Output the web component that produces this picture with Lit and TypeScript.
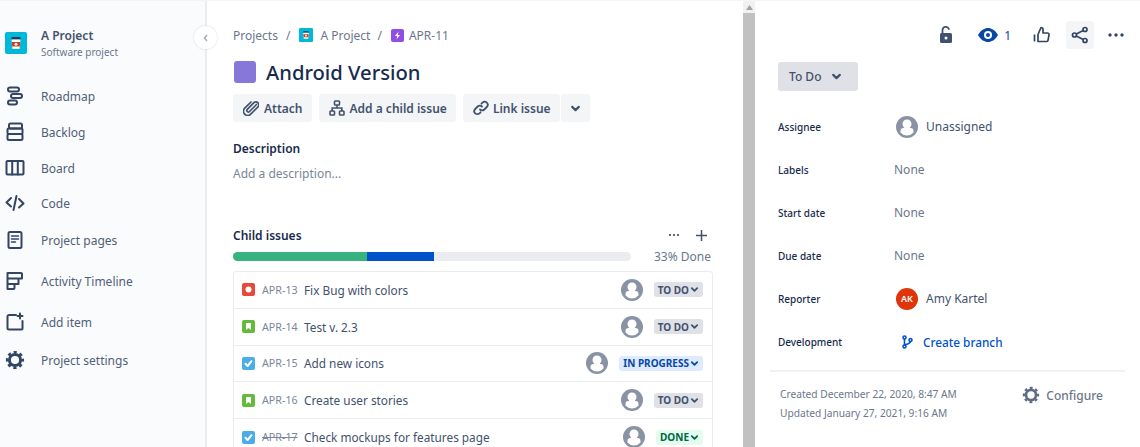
import { LitElement, html, css, svg } from "lit";
import { customElement } from "lit/decorators.js";

const stroke = (body: unknown, size = 20, color = "#344563", width = 2) => html`<svg width=${size} height=${size} viewBox="0 0 20 20" fill="none" stroke=${color} stroke-width=${width} stroke-linecap="round" stroke-linejoin="round">${body}</svg>`;

const gear = (size: number, color: string) => html`<svg width=${size} height=${size} viewBox="0 0 20 20" fill="none" stroke=${color}>
  <circle cx="10" cy="10" r="5.6" stroke-width="3"></circle>
  <circle cx="10" cy="10" r="7.9" stroke-width="2.4" stroke-dasharray="3.2 3" stroke-dashoffset="1.6"></circle>
</svg>`;

const navIcons: Record<string, unknown> = {
  roadmap: stroke(svg`<rect x="3" y="1.5" width="11" height="4" rx="2"/><rect x="6" y="8" width="11" height="4" rx="2"/><rect x="3" y="14.5" width="9" height="4" rx="2"/>`),
  backlog: stroke(svg`<rect x="4" y="1.5" width="13" height="5" rx="1.5"/><rect x="2.5" y="6.5" width="15" height="5.5" rx="1"/><rect x="2.5" y="12" width="15" height="6" rx="1.5"/>`),
  board: stroke(svg`<rect x="1.5" y="3" width="17" height="13.5" rx="1"/><path d="M7.2 3v13.5M12.8 3v13.5"/>`),
  code: stroke(svg`<path d="M6 5 1.5 9.5 6 13.5M14 6l4.5 4.5L14 14.500M11.500 3 8.500 17"/>`),
  pages: stroke(svg`<rect x="3.500" y="2" width="13" height="16" rx="1.500"/><path d="M6.500 6h7M6.500 9h7M6.500 12h4" stroke-width="1.500"/>`),
  timeline: stroke(svg`<path d="M2.500 2h13.500a1 1 0 0 1 1 1v4.500h-14.500zM2.500 7.500h11v5.500h-11zM2.500 13h7v4a1 1 0 0 1-1 1h-6z" />`),
  add: stroke(svg`<path d="M11 3H4a1.500 1.500 0 0 0-1.500 1.500V16A1.500 1.500 0 0 0 4 17.500h12.500a1 1 0 0 0 1-1V9"/><path d="M15 1.500v5M12.500 4h5"/>`),
  settings: gear(20, "#344563"),
};

const nav = [
  { icon: "roadmap", label: "Roadmap", h: 36 },
  { icon: "backlog", label: "Backlog", h: 36 },
  { icon: "board", label: "Board", h: 36 },
  { icon: "code", label: "Code", h: 34 },
  { icon: "pages", label: "Project pages", h: 40 },
  { icon: "timeline", label: "Activity Timeline", h: 42 },
  { icon: "add", label: "Add item", h: 40 },
  { icon: "settings", label: "Project settings", h: 36 },
];

const projectLogo = (size: number) => html`<svg width=${size} height=${size} viewBox="0 0 22 22">
  <rect width="22" height="22" rx="2" fill="#00b8d9"></rect>
  <path d="M7 5h8l1 2.500H6z" fill="#253858"></path>
  <path d="M6.500 7.500h9l-1 9.500h-7z" fill="#fff"></path>
  <path d="M6.800 10h8.400l-.5 4.500H7.300z" fill="#de350b"></path>
  <circle cx="11" cy="12.200" r="1.500" fill="#fff"></circle>
</svg>`;

const typeIcon = (t: string) => {
  if (t === "bug") return html`<svg width="13" height="13" viewBox="0 0 13 13"><rect width="13" height="13" rx="2" fill="#e5493a"></rect><circle cx="6.500" cy="6.500" r="3" fill="#fff"></circle></svg>`;
  if (t === "story") return html`<svg width="13" height="13" viewBox="0 0 13 13"><rect width="13" height="13" rx="2" fill="#63ba3c"></rect><path d="M4 3h5v7L6.500 8 4 10z" fill="#fff"></path></svg>`;
  return html`<svg width="13" height="13" viewBox="0 0 13 13"><rect width="13" height="13" rx="2" fill="#4bade8"></rect><path d="M3.500 6.800 5.600 9 9.500 4.200" fill="none" stroke="#fff" stroke-width="2" stroke-linecap="round" stroke-linejoin="round"></path></svg>`;
};

const avatar = (size: number) => html`<svg width=${size} height=${size} viewBox="0 0 22 22" style="flex:none">
  <circle cx="11" cy="11" r="11" fill="#8993a4"></circle>
  <circle cx="11" cy="8" r="4.500" fill="#fff"></circle>
  <path d="M4.500 15a3 3 0 0 1 3-3h7a3 3 0 0 1 3 3v1.500a8.500 8.500 0 0 1-13 0z" fill="#fff"></path>
</svg>`;

const chevron = (color: string, size = 10) => html`<svg width=${size} height=${size} viewBox="0 0 10 10" fill="none" stroke=${color} stroke-width="2" stroke-linecap="round" stroke-linejoin="round"><path d="M2 3.500 5 6.500 8 3.500"></path></svg>`;

const issues = [
  { type: "bug", key: "APR-13", text: "Fix Bug with colors", status: "TO DO", cls: "todo" },
  { type: "story", key: "APR-14", text: "Test v. 2.3", status: "TO DO", cls: "todo" },
  { type: "task", key: "APR-15", text: "Add new icons", status: "IN PROGRESS", cls: "prog" },
  { type: "story", key: "APR-16", text: "Create user stories", status: "TO DO", cls: "todo" },
  { type: "task", key: "APR-17", text: "Check mockups for features page", status: "DONE", cls: "done", strike: true },
];

const fields = ["Assignee", "Labels", "Start date", "Due date", "Reporter", "Development"];

@customElement("app-root")
export class AppRoot extends LitElement {
  static styles = css`
    :host { display: block; width: 1140px; height: 447px; overflow: hidden; background: #fff;
      font-family: "Noto Sans", "Open Sans", sans-serif; color: #42526e; font-size: 12px; }
    * { box-sizing: border-box; }
    .app { display: flex; height: 447px; border-top: 1px solid #f4f5f7; position: relative; }
    .side { width: 207px; flex: none; background: #fafbfc; border-right: 2px solid #ebecf0; padding: 27px 0 0 5px; }
    .proj { display: flex; align-items: flex-start; gap: 14px; height: 48px; margin-bottom: 2px; }
    .proj svg { margin-top: 4px; }
    .pname { font-size: 12px; font-weight: 600; line-height: 16px; }
    .psub { font-size: 10px; color: #6b778c; line-height: 16px; }
    .nav { display: flex; align-items: center; gap: 16px; color: #505f79; font-size: 12px; }
    .nav svg { flex: none; }
    .collapse { position: absolute; left: 194px; top: 25px; width: 23px; height: 23px; border-radius: 50%; background: #fff;
      box-shadow: 0 0 2px rgba(9,30,66,.18); display: flex; align-items: center; justify-content: center; }
    .main { width: 536px; flex: none; padding: 0 30px 0 26px; }
    .crumbs { display: flex; align-items: center; height: 20px; margin-top: 24px; color: #6b778c; font-size: 12px; }
    .crumbs .sep { margin: 0 9px 0 7px; }
    .crumbs .sep.first { margin-left: 8px; }
    .crumbs .logo { display: flex; margin-right: 7px; }
    .crumbs .epic { display: flex; margin-right: 5px; }
    .title { display: flex; align-items: center; gap: 10px; margin-top: 10px; height: 34px; font-size: 20.2px; font-weight: 500; color: #172b4d; }
    .sq { width: 22px; height: 22px; margin-left: 1px; border-radius: 3px; background: #8777d9; flex: none; }
    .btns { display: flex; gap: 7px; margin-top: 5px; }
    .btn { height: 28px; display: flex; align-items: center; gap: 5px; background: #f4f5f7; border-radius: 3px; padding: 0 9px 0 10px; font-size: 12px; font-weight: 600; color: #42526e; }
    .btn.tight { gap: 4px; }
    .split { display: flex; gap: 1px; }
    .split .btn.arrow { padding: 0 9px; }
    .h { font-size: 12px; font-weight: 600; color: #172b4d; }
    .desc-h { margin-top: 18px; height: 18px; line-height: 18px; }
    .desc { margin-top: 7px; color: #7a869a; font-size: 12px; height: 18px; line-height: 18px; }
    .child-head { display: flex; align-items: center; margin-top: 43px; height: 18px; width: 475px; }
    .child-head .h { flex: 1; }
    .head-tools { display: flex; align-items: center; gap: 15px; }
    .prog-row { display: flex; align-items: center; justify-content: space-between; width: 478px; margin-top: 3px; height: 18px; }
    .bar { width: 398px; height: 9px; border-radius: 5px; background: #ebecf0; display: flex; overflow: hidden; }
    .bar i { display: block; height: 100%; }
    .pct { color: #6b778c; font-size: 12px; }
    .table { width: 480px; margin-top: 6px; border: 1px solid #ebecf0; border-radius: 3px 3px 0 0; }
    .row { display: flex; align-items: center; height: 36.8px; padding: 0 9px 0 8px; border-bottom: 1px solid #ebecf0; }
    .key { width: 42px; margin-left: 7px; color: #7a869a; font-size: 10.7px; flex: none; }
    .key.strike { text-decoration: line-through; }
    .sum { flex: 1; font-size: 11.8px; color: #42526e; }
    .loz { margin-left: 11px; height: 15px; display: flex; align-items: center; gap: 1px; border-radius: 3px; padding: 0 4px; font-size: 10px; font-weight: 700; }
    .todo { background: #dfe1e6; color: #42526e; }
    .prog { background: #deebff; color: #0747a6; }
    .done { background: #e3fcef; color: #006644; }
    .scroll { width: 12px; flex: none; background: #f1f1f1; display: flex; flex-direction: column; align-items: center; }
    .scroll .arrow { height: 12px; display: flex; align-items: center; justify-content: center; }
    .scroll .thumb { flex: 1; width: 100%; background: #c1c1c1; }
    .right { flex: 1; padding: 0 14px 0 23px; min-width: 0; }
    .tools { display: flex; align-items: center; justify-content: flex-end; height: 28px; margin: 20px -4px 0 0; }
    .tool { display: flex; align-items: center; justify-content: center; height: 28px; width: 28px; }
    .tool.on { background: #f4f5f7; border-radius: 3px; }
    .tool.lock { margin-right: 18px; }
    .tool.like { margin-left: 17px; }
    .tool.share { margin-left: 10px; }
    .tool.more { margin-left: 8px; }
    .count { color: #0747a6; font-size: 12px; margin-left: 6px; }
    .status { display: flex; align-items: center; gap: 10px; width: 80px; height: 29px; padding-left: 11px; margin-top: 13px; background: #dfe1e6; border-radius: 3px; font-size: 12px; font-weight: 500; color: #42526e; }
    .fields { display: grid; grid-template-columns: 116px 1fr; grid-auto-rows: 43px; margin-top: 14px; align-items: center; }
    .lab { font-size: 10px; font-weight: 500; color: #172b4d; }
    .val { display: flex; align-items: center; color: #6b778c; font-size: 12px; }
    .val.person { gap: 8px; padding-left: 2px; color: #42526e; }
    .val.link { padding-left: 8px; gap: 10px; color: #0052cc; font-weight: 500; font-size: 11.8px; }
    .ak { width: 22px; height: 22px; border-radius: 50%; background: #de350b; color: #fff; font-size: 9px; font-weight: 600; display: flex; align-items: center; justify-content: center; }
    .foot { display: flex; justify-content: space-between; margin: 7px 0 0 -8px; border-top: 2px solid #f0f1f3; padding: 13px 22px 0 10px; width: 355px; }
    .dates { font-size: 10.2px; color: #6b778c; line-height: 19px; }
    .conf { display: flex; align-items: center; gap: 6px; height: 24px; margin-top: -2px; color: #6b778c; font-size: 12px; font-weight: 500; }
  `;

  render() {
    return html`<div class="app">
      <aside class="side">
        <div class="proj">
          ${projectLogo(22)}
          <div><div class="pname">A Project</div><div class="psub">Software project</div></div>
        </div>
        ${nav.map((n) => html`<div class="nav" style="height:${n.h}px">${navIcons[n.icon]}<span>${n.label}</span></div>`)}
      </aside>
      <div class="collapse"><svg width="10" height="10" viewBox="0 0 10 10" fill="none" stroke="#a5adba" stroke-width="1.500"><path d="M6 2 3.500 5 6 8"></path></svg></div>

      <main class="main">
        <div class="crumbs">
          <span>Projects</span><span class="sep first">/</span>
          <span class="logo">${projectLogo(14)}</span><span>A Project</span><span class="sep">/</span>
          <span class="epic"><svg width="13" height="13" viewBox="0 0 13 13"><rect width="13" height="13" rx="2" fill="#904ee2"></rect><path d="M7.500 2.500 4 7h2.200L5.500 10.500 9 6H6.800z" fill="#fff"></path></svg></span><span>APR-11</span>
        </div>
        <div class="title"><span class="sq"></span><span>Android Version</span></div>
        <div class="btns">
          <div class="btn">
            <svg width="16" height="16" viewBox="0 0 16 16" fill="none" stroke="#42526e" stroke-width="1.700" stroke-linecap="round"><path d="M13.500 4.500 6.500 11.500a1.500 1.500 0 0 1-2.200-2.200l7-7a3 3 0 0 1 3.900 4.400l-7.500 7.500a4.200 4.200 0 0 1-6-6L8 2"></path></svg>
            <span>Attach</span></div>
          <div class="btn">
            <svg width="16" height="16" viewBox="0 0 16 16" fill="none" stroke="#42526e" stroke-width="1.600"><rect x="5.500" y="1" width="5" height="4" rx=".7"></rect><rect x="1" y="11" width="4.500" height="4" rx=".7"></rect><rect x="10.500" y="11" width="4.500" height="4" rx=".7"></rect><path d="M8 5v3M3.200 11V8h9.600v3"></path></svg>
            <span>Add a child issue</span></div>
          <div class="split">
            <div class="btn tight">
              <svg width="16" height="16" viewBox="0 0 16 16" fill="none" stroke="#42526e" stroke-width="1.800" stroke-linecap="round"><path d="M7 9.500a3 3 0 0 0 4.300 0l2.500-2.500A3 3 0 0 0 9.500 2.700L8.500 3.700"></path><path d="M9 6.500a3 3 0 0 0-4.300 0L2.200 9a3 3 0 0 0 4.300 4.300l1-1"></path></svg>
              <span>Link issue</span></div>
            <div class="btn arrow">${chevron("#42526e", 11)}</div>
          </div>
        </div>
        <div class="h desc-h">Description</div>
        <div class="desc">Add a description...</div>
        <div class="child-head">
          <span class="h">Child issues</span>
          <div class="head-tools">
            <svg width="12" height="4" viewBox="0 0 12 4" fill="#344563"><circle cx="2" cy="2" r="1.100"></circle><circle cx="6" cy="2" r="1.100"></circle><circle cx="10" cy="2" r="1.100"></circle></svg>
            <svg width="13" height="13" viewBox="0 0 13 13" stroke="#42526e" stroke-width="1.500"><path d="M6.500 1v11M1 6.500h11"></path></svg></div>
        </div>
        <div class="prog-row">
          <div class="bar"><i style="width:134px;background:#36b37e"></i><i style="width:67px;background:#0052cc"></i></div>
          <span class="pct">33% Done</span>
        </div>
        <div class="table">
          ${issues.map((r) => html`<div class="row">
            ${typeIcon(r.type)}
            <span class="key ${r.strike ? "strike" : ""}">${r.key}</span>
            <span class="sum">${r.text}</span>
            ${avatar(22)}
            <span class="loz ${r.cls}">${r.status}${chevron(r.cls === "todo" ? "#42526e" : r.cls === "prog" ? "#0747a6" : "#006644", 9)}</span>
          </div>`)}
        </div>
      </main>

      <div class="scroll">
        <div class="arrow"><svg width="7" height="5" viewBox="0 0 7 5"><path d="M3.500 0 7 5H0z" fill="#a3a3a3"></path></svg></div>
        <div class="thumb"></div>
      </div>

      <section class="right">
        <div class="tools">
          <span class="tool lock"><svg width="16" height="20" viewBox="0 0 16 20"><path d="M4.500 8V5a3.300 3.300 0 0 1 6.400-1" fill="none" stroke="#42526e" stroke-width="1.800" stroke-linecap="round"></path><rect x="2" y="8" width="12" height="10" rx="1.500" fill="#42526e"></rect><circle cx="8" cy="13" r="1.500" fill="#fff"></circle></svg></span>
          <svg width="20" height="14" viewBox="0 0 20 14"><path d="M0 7c3-5 6.500-7 10-7s7 2 10 7c-3 5-6.500 7-10 7S3 12 0 7z" fill="#0747a6"></path><circle cx="10" cy="7" r="4" fill="#fff"></circle><circle cx="10" cy="7" r="2" fill="#0747a6"></circle></svg>
          <span class="count">1</span>
          <span class="tool like"><svg width="18" height="18" viewBox="0 0 18 18" fill="none" stroke="#344563" stroke-width="1.700" stroke-linejoin="round"><path d="M1.500 8.500v7M5 8.500l3-7a2 2 0 0 1 2 2V7h4.500a1.500 1.500 0 0 1 1.500 1.800l-1 5.500a1.500 1.500 0 0 1-1.500 1.200H5z"></path></svg></span>
          <span class="tool on share"><svg width="18" height="18" viewBox="0 0 18 18" fill="none" stroke="#344563" stroke-width="1.700"><circle cx="3.500" cy="9" r="2"></circle><circle cx="14" cy="3.500" r="2"></circle><circle cx="14" cy="14.500" r="2"></circle><path d="M5.300 8 12.200 4.500M5.300 10l6.900 3.500"></path></svg></span>
          <span class="tool more"><svg width="18" height="6" viewBox="0 0 18 6" fill="#344563"><circle cx="3" cy="3" r="1.700"></circle><circle cx="9" cy="3" r="1.700"></circle><circle cx="15" cy="3" r="1.700"></circle></svg></span>
        </div>
        <div class="status"><span>To Do</span>${chevron("#42526e", 11)}</div>
        <div class="fields">
          <span class="lab">${fields[0]}</span><span class="val person">${avatar(22)}<span>Unassigned</span></span>
          <span class="lab">${fields[1]}</span><span class="val">None</span>
          <span class="lab">${fields[2]}</span><span class="val">None</span>
          <span class="lab">${fields[3]}</span><span class="val">None</span>
          <span class="lab">${fields[4]}</span><span class="val person"><span class="ak">AK</span><span>Amy Kartel</span></span>
          <span class="lab">${fields[5]}</span><span class="val link"><svg width="11" height="14" viewBox="0 0 11 14" fill="none" stroke="#0052cc" stroke-width="1.600"><circle cx="2.500" cy="2.500" r="1.500"></circle><circle cx="2.500" cy="11.500" r="1.500"></circle><circle cx="8.500" cy="5" r="1.500"></circle><path d="M2.500 4v6M8.500 6.500c0 2-3 2.500-6 3.500"></path></svg><span>Create branch</span></span>
        </div>
        <div class="foot">
          <div class="dates"><div>Created December 22, 2020, 8:47 AM</div><div>Updated January 27, 2021, 9:16 AM</div></div>
          <div class="conf">${gear(18, "#5e6c84")}<span>Configure</span></div>
        </div>
      </section>
    </div>`;
  }
}
